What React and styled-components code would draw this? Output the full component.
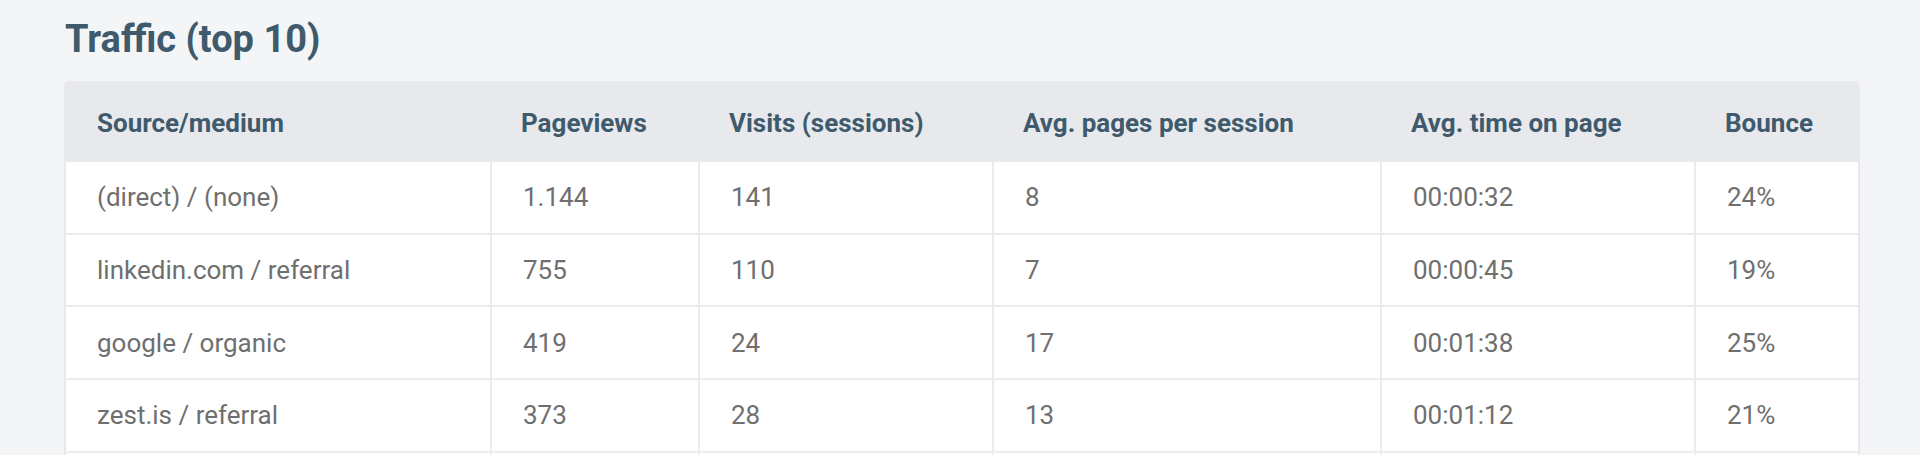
import React from "react";
import styled, { createGlobalStyle } from "styled-components";

const GlobalStyle = createGlobalStyle`
  html, body {
    margin: 0;
    padding: 0;
    background: #f4f5f7;
  }
  *, *::before, *::after { box-sizing: border-box; }
  body {
    font-family: Roboto, "Liberation Sans", Arial, sans-serif;
  }
`;

const Page = styled.main`
  padding: 18px 62px 40px 64px;
  background: #f4f5f7;
  min-height: 455px;
`;

const Title = styled.h2`
  margin: 0 0 21px 1px;
  font-size: 38px;
  line-height: 42px;
  font-weight: 700;
  color: #3e5a6c;
  letter-spacing: 0;
`;

const TableFrame = styled.div`
  width: 1796px;
  border: 2px solid #e8e9ed;
  border-radius: 5px;
  overflow: hidden;
  background: #ffffff;
`;

const Table = styled.table`
  width: 1792px;
  table-layout: fixed;
  border-collapse: separate;
  border-spacing: 0;
  font-size: 26px;
`;

const HeadCell = styled.th`
  height: 78px;
  padding: 1px 31px 0;
  background: #e8e9ed;
  color: #3e5a6c;
  font-weight: 700;
  text-align: left;
  vertical-align: middle;
  white-space: nowrap;
  box-sizing: content-box;
`;

const Cell = styled.td`
  height: 70.7px;
  padding: 0 31px;
  color: #6f6f6f;
  font-weight: 400;
  vertical-align: middle;
  white-space: nowrap;
  border-bottom: 2px solid #ebecef;
  border-left: ${(p) => (p.$first ? "none" : "2px solid #ebecef")};
  box-sizing: content-box;
`;

const columns = [
  { label: "Source/medium", width: 424 },
  { label: "Pageviews", width: 208 },
  { label: "Visits (sessions)", width: 294 },
  { label: "Avg. pages per session", width: 388 },
  { label: "Avg. time on page", width: 314 },
  { label: "Bounce", width: 164 },
];

const rows = [
  ["(direct) / (none)", "1.144", "141", "8", "00:00:32", "24%"],
  ["linkedin.com / referral", "755", "110", "7", "00:00:45", "19%"],
  ["google / organic", "419", "24", "17", "00:01:38", "25%"],
  ["zest.is / referral", "373", "28", "13", "00:01:12", "21%"],
  ["bing / organic", "96", "11", "9", "00:00:58", "27%"],
  ["facebook.com / referral", "74", "13", "6", "00:00:41", "31%"],
  ["twitter.com / referral", "52", "9", "6", "00:00:37", "33%"],
  ["duckduckgo / organic", "38", "6", "6", "00:01:05", "17%"],
  ["github.com / referral", "27", "5", "5", "00:00:49", "20%"],
  ["slack.com / referral", "19", "4", "5", "00:00:29", "25%"],
];

export default function App() {
  return (
    <>
      <GlobalStyle />
      <Page>
        <Title>Traffic (top 10)</Title>
        <TableFrame>
          <Table>
            <colgroup>
              {columns.map((c) => (
                <col key={c.label} style={{ width: `${c.width}px` }} />
              ))}
            </colgroup>
            <thead>
              <tr>
                {columns.map((c) => (
                  <HeadCell key={c.label}>{c.label}</HeadCell>
                ))}
              </tr>
            </thead>
            <tbody>
              {rows.map((r) => (
                <tr key={r[0]}>
                  {r.map((v, i) => (
                    <Cell key={i} $first={i === 0}>
                      {v}
                    </Cell>
                  ))}
                </tr>
              ))}
            </tbody>
          </Table>
        </TableFrame>
      </Page>
    </>
  );
}
